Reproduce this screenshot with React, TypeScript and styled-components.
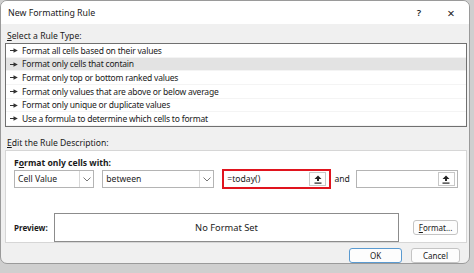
import styled, { createGlobalStyle } from 'styled-components';

const GlobalStyle = createGlobalStyle`
  html, body {
    margin: 0;
    padding: 0;
    background: #cfcfcf;
    font-family: 'Noto Sans', 'Open Sans', sans-serif;
  }
`;

const ruleTypes = [
  'Format all cells based on their values',
  'Format only cells that contain',
  'Format only top or bottom ranked values',
  'Format only values that are above or below average',
  'Format only unique or duplicate values',
  'Use a formula to determine which cells to format',
];

const Chevron = () => (
  <svg width="8" height="5" viewBox="0 0 8 5">
    <path d="M0.5 0.5 L4 4 L7.5 0.5" fill="none" stroke="#777" strokeWidth="1" />
  </svg>
);

const RefIcon = () => (
  <svg width="8" height="9" viewBox="0 0 8 9">
    <path d="M4 0.5 L7.5 4 L5 4 L5 6 L3 6 L3 4 L0.5 4 Z" fill="#222" />
    <rect x="0.5" y="7.5" width="7" height="1.2" fill="#222" />
  </svg>
);

const RowArrow = () => (
  <svg width="8" height="5" viewBox="0 0 8 5">
    <path d="M0 2.5 L4 2.5" stroke="#333" strokeWidth="1" />
    <path d="M3.5 0.3 L7.8 2.5 L3.5 4.7 Z" fill="#333" />
  </svg>
);

const App = () => {
  return (
    <>
      <GlobalStyle />
      <Window>
        <TitleBar>
          <Title>New Formatting Rule</Title>
          <TitleButtons>
            <HelpBtn>?</HelpBtn>
            <CloseBtn>×</CloseBtn>
          </TitleButtons>
        </TitleBar>
        <Body>
          <Label>
            <u>S</u>elect a Rule Type:
          </Label>
          <RuleList>
            {ruleTypes.map((t, i) => (
              <RuleRow key={t} selected={i === 1}>
                <ArrowWrap>
                  <RowArrow />
                </ArrowWrap>
                {t}
              </RuleRow>
            ))}
          </RuleList>
          <Label spaced>
            <u>E</u>dit the Rule Description:
          </Label>
          <DescPanel>
            <BoldLabel>
              F<u>o</u>rmat only cells with:
            </BoldLabel>
            <ControlRow>
              <Select width={81}>
                <SelectText>Cell Value</SelectText>
                <ChevronBox>
                  <Chevron />
                </ChevronBox>
              </Select>
              <Select width={113}>
                <SelectText>between</SelectText>
                <ChevronBox>
                  <Chevron />
                </ChevronBox>
              </Select>
              <RefInput width={110} highlighted>
                <InputText>=today()</InputText>
                <RefButton>
                  <RefIcon />
                </RefButton>
              </RefInput>
              <AndText>and</AndText>
              <RefInput width={103}>
                <InputText />
                <RefButton>
                  <RefIcon />
                </RefButton>
              </RefInput>
            </ControlRow>
            <PreviewRow>
              <PreviewLabel>Preview:</PreviewLabel>
              <PreviewBox>No Format Set</PreviewBox>
              <Button width={45}>
                <u>F</u>ormat...
              </Button>
            </PreviewRow>
          </DescPanel>
          <Footer>
            <Button width={53} primary>
              OK
            </Button>
            <Button width={49}>Cancel</Button>
          </Footer>
        </Body>
      </Window>
    </>
  );
};

export default App;

const Window = styled.div`
  width: 470px;
  height: 264px;
  box-sizing: border-box;
  background: #f0f0f0;
  border-radius: 7px;
  border: 1px solid #9a9a9a;
  overflow: hidden;
  display: flex;
  flex-direction: column;
  color: #1a1a1a;
`;

const TitleBar = styled.div`
  height: 23px;
  flex-shrink: 0;
  background: #ffffff;
  display: flex;
  align-items: center;
  justify-content: space-between;
  padding: 0 0 0 7px;
`;

const Title = styled.span`
  font-size: 8.8px;
`;

const TitleButtons = styled.div`
  display: flex;
  align-items: center;
  padding-right: 2px;
`;

const HelpBtn = styled.span`
  width: 32px;
  text-align: center;
  font-size: 9.5px;
  font-weight: 600;
  color: #222;
`;

const CloseBtn = styled.span`
  width: 32px;
  text-align: center;
  font-size: 13px;
  color: #222;
`;

const Body = styled.div`
  flex: 1;
  display: flex;
  flex-direction: column;
  padding: 6px 2px 0 4px;
`;

const Label = styled.div<{ spaced?: boolean }>`
  font-size: 8.6px;
  height: 13px;
  line-height: 13px;
  margin-top: ${(p) => (p.spaced ? '10px' : '0')};
  margin-left: 2px;
`;

const RuleList = styled.div`
  background: #ffffff;
  border: 1px solid #707070;
  height: 84px;
  box-sizing: border-box;
  display: flex;
  flex-direction: column;
  flex-shrink: 0;
`;

const RuleRow = styled.div<{ selected?: boolean }>`
  height: 13.7px;
  line-height: 13.7px;
  font-size: 8.5px;
  letter-spacing: -0.2px;
  padding-left: 4px;
  background: ${(p) => (p.selected ? '#e3e3e3' : 'transparent')};
  border-bottom: 1px solid #f4f4f4;
  box-sizing: border-box;
  white-space: nowrap;
  display: flex;
  align-items: center;
`;

const ArrowWrap = styled.span`
  display: flex;
  align-items: center;
  margin-right: 4px;
`;

const DescPanel = styled.div`
  background: #ffffff;
  border: 1px solid #d6d6d6;
  height: 93px;
  flex-shrink: 0;
  box-sizing: border-box;
  padding: 6px 8px 0 8px;
  display: flex;
  flex-direction: column;
`;

const BoldLabel = styled.div`
  font-size: 8.6px;
  font-weight: 700;
  height: 12px;
  line-height: 12px;
`;

const ControlRow = styled.div`
  display: flex;
  align-items: center;
  gap: 8px;
  height: 20px;
`;

const Select = styled.div<{ width: number }>`
  width: ${(p) => p.width}px;
  height: 18px;
  box-sizing: border-box;
  border: 1px solid #b4b4b4;
  display: flex;
  align-items: stretch;
`;

const SelectText = styled.span`
  flex: 1;
  font-size: 8.6px;
  line-height: 16px;
  padding-left: 3px;
`;

const ChevronBox = styled.span`
  width: 13px;
  border-left: 1px solid #d8d8d8;
  display: flex;
  align-items: center;
  justify-content: center;
`;

const RefInput = styled.div<{ width: number; highlighted?: boolean }>`
  width: ${(p) => p.width}px;
  height: ${(p) => (p.highlighted ? 20 : 18)}px;
  box-sizing: border-box;
  border: ${(p) => (p.highlighted ? '2px solid #e0141e' : '1px solid #b4b4b4')};
  padding: ${(p) => (p.highlighted ? '0 1px' : '0')};
  display: flex;
  align-items: stretch;
`;

const InputText = styled.span`
  flex: 1;
  font-size: 8.6px;
  line-height: 16px;
  padding-left: 2px;
`;

const RefButton = styled.span`
  width: 15px;
  margin: 1px 2px 1px 0;
  border: 1px solid #c8c8c8;
  display: flex;
  align-items: center;
  justify-content: center;
`;

const AndText = styled.span`
  font-size: 8.6px;
  margin: 0 -2px 0 -5px;
`;

const PreviewRow = styled.div`
  display: flex;
  align-items: center;
  margin-top: 24px;
`;

const PreviewLabel = styled.span`
  font-size: 8px;
  font-weight: 700;
  width: 40px;
`;

const PreviewBox = styled.div`
  width: 346px;
  height: 29px;
  box-sizing: border-box;
  border: 1px solid #8c8c8c;
  display: flex;
  align-items: center;
  justify-content: center;
  font-size: 9.3px;
  margin-right: 14px;
`;

const Button = styled.div<{ width: number; primary?: boolean }>`
  width: ${(p) => p.width}px;
  height: 15px;
  box-sizing: border-box;
  border: 1px solid ${(p) => (p.primary ? '#5a9ad0' : '#c4c4c4')};
  border-radius: 3px;
  background: #fdfdfd;
  font-size: 8px;
  display: flex;
  align-items: center;
  justify-content: center;
`;

const Footer = styled.div`
  display: flex;
  justify-content: flex-end;
  gap: 9px;
  padding: 5px 7px 0 0;
`;
